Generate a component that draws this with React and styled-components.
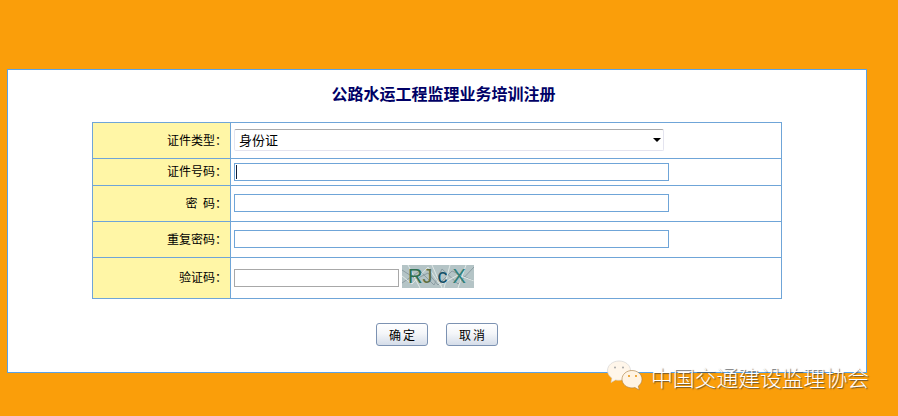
import React from 'react';
import styled, { createGlobalStyle } from 'styled-components';

const GlobalStyle = createGlobalStyle`
  html, body {
    margin: 0;
    padding: 0;
    background: #fa9e0a;
  }
`;

const Page = styled.div`
  position: relative;
  width: 898px;
  height: 416px;
  padding: 69px 0 0 7px;
  box-sizing: border-box;
  overflow: hidden;
  background: #fa9e0a;
  font-family: "Noto Sans CJK SC", "Liberation Sans", sans-serif;
  font-size: 12px;
  color: #000;
`;

const Panel = styled.div`
  width: 860px;
  height: 304px;
  box-sizing: border-box;
  background: #fff;
  border: 1px solid #5aa2e6;
`;

const Title = styled.h1`
  margin: 0;
  padding: 13px 0 0 13px;
  height: 52px;
  box-sizing: border-box;
  text-align: center;
  font-size: 16px;
  line-height: 20px;
  font-weight: bold;
  color: #000066;
`;

const FormTable = styled.table`
  width: 690px;
  margin: 0 auto;
  border-collapse: collapse;
  table-layout: fixed;
`;

const Row = styled.tr`
  height: ${(p) => p.$height}px;
`;

const Label = styled.td`
  width: 134px;
  padding: 0 3px 2px 0;
  border: 1px solid #6fa5d8;
  background: #fff6a6;
  text-align: right;
  line-height: 16px;
`;

const Field = styled.td`
  padding: 0 3px 1px;
  border: 1px solid #6fa5d8;
`;

const FieldInner = styled.div`
  position: relative;
  display: flex;
  align-items: center;
`;

const SelectBox = styled.div`
  position: relative;
  width: 430px;
  height: 22px;

  &::after {
    content: "";
    position: absolute;
    right: 3px;
    top: 9px;
    border-style: solid;
    border-width: 4px 4px 0;
    border-color: #000 transparent transparent;
  }
`;

const Select = styled.select`
  appearance: none;
  display: block;
  width: 100%;
  height: 100%;
  padding: 0 0 2px 4px;
  box-sizing: border-box;
  border: 1px solid #e4e4ef;
  border-top-color: #aaa;
  border-radius: 2px;
  background: #fff;
  font: inherit;
  font-size: 13px;
  color: #000;
  outline: none;
`;

const TextInput = styled.input`
  display: block;
  width: ${(p) => p.$width || 435}px;
  height: 18px;
  padding: 0 1px;
  box-sizing: border-box;
  border: 1px solid ${(p) => (p.$plain ? '#a8a8a8' : '#6fa5d8')};
  background: #fff;
  font: inherit;
  outline: none;
`;

const Caret = styled.span`
  position: absolute;
  left: 2px;
  top: 2px;
  width: 1px;
  height: 14px;
  background: #10203a;
`;

const Captcha = styled.div`
  position: relative;
  display: flex;
  align-items: center;
  width: 72px;
  height: 23px;
  margin: -3px 0 0 3px;
  padding-left: 6px;
  box-sizing: border-box;
  background: #b4c4c6;
  font-family: "Liberation Sans", sans-serif;
  line-height: 20px;
`;

const CaptchaNoise = styled.svg`
  position: absolute;
  left: 0;
  top: 0;
`;

const CaptchaChar = styled.span`
  position: relative;
  margin-left: ${(p) => p.$gap || 0}px;
  color: ${(p) => p.$color};
  font-size: ${(p) => p.$size}px;
`;

const Buttons = styled.div`
  display: flex;
  justify-content: center;
  gap: 18px;
  margin-top: 24px;
`;

const Button = styled.button`
  width: 52px;
  height: 23px;
  padding: 0 0 0 2px;
  box-sizing: border-box;
  border: 1px solid #7c92b2;
  border-radius: 3px;
  background: linear-gradient(#ffffff, #f4f6f9 45%, #d5dde9);
  font: inherit;
  letter-spacing: 2px;
  color: #000;
`;

const Watermark = styled.div`
  position: absolute;
  left: 606px;
  top: 360px;
  display: flex;
  align-items: flex-start;
  gap: 8px;
`;

const WatermarkText = styled.span`
  margin-top: 3px;
  font-size: 21.8px;
  line-height: 28px;
  font-weight: 300;
  color: #fff;
  white-space: nowrap;
  text-shadow: 1px 1px 1px rgba(60, 60, 60, 0.75);
`;

const WechatIcon = () => (
  <svg width="37" height="31" viewBox="0 0 37 31">
    <path
      d="M13 1C6.5 1 1.5 5.3 1.5 10.6c0 3.1 1.700 5.800 4.400 7.600L5 22.500l4.600-2.600c1.100.3 2.200.4 3.400.4 6.500 0 11.500-4.300 11.500-9.700S19.500 1 13 1z"
      fill="#fff6ea"
      stroke="#cfcfcf"
      strokeWidth="0.6"
    />
    <path
      d="M26 10.500c-5.500 0-10 3.900-10 8.700s4.500 8.700 10 8.700c1 0 2-.1 2.900-.4l4.300 2.500-.9-3.900c2.300-1.600 3.700-4.100 3.700-6.900 0-4.800-4.500-8.700-10-8.700z"
      fill="#fff3e2"
      stroke="#a87a3a"
      strokeWidth="0.6"
    />
    <circle cx="9" cy="7.500" r="1" fill="#a8a8a8" />
    <circle cx="17" cy="7.500" r="1" fill="#a8a8a8" />
    <circle cx="23" cy="16" r="1" fill="#e8920a" />
    <circle cx="30" cy="16" r="1" fill="#e8920a" />
  </svg>
);

const App = () => (
  <Page>
    <GlobalStyle />
    <Panel>
      <Title>公路水运工程监理业务培训注册</Title>
      <FormTable>
        <tbody>
          <Row $height={36}>
            <Label>证件类型：</Label>
            <Field>
              <SelectBox>
                <Select defaultValue="身份证">
                  <option>身份证</option>
                </Select>
              </SelectBox>
            </Field>
          </Row>
          <Row $height={27}>
            <Label>证件号码：</Label>
            <Field>
              <FieldInner>
                <TextInput />
                <Caret />
              </FieldInner>
            </Field>
          </Row>
          <Row $height={36}>
            <Label>密&nbsp;&nbsp;码：</Label>
            <Field>
              <TextInput type="password" />
            </Field>
          </Row>
          <Row $height={36}>
            <Label>重复密码：</Label>
            <Field>
              <TextInput type="password" />
            </Field>
          </Row>
          <Row $height={41}>
            <Label>验证码：</Label>
            <Field>
              <FieldInner>
                <TextInput $plain $width={165} />
                <Captcha>
                  <CaptchaNoise width="72" height="23" viewBox="0 0 72 23">
                    <g fill="none" stroke="#8c9da3" strokeWidth="1">
                      <path d="M0 5l14 9 12-6 10 12 14-14 22 10" />
                      <path d="M0 18l18-12 14 14 8-16 16 15 16-17" />
                    </g>
                    <g fill="none" stroke="#dfe8e6" strokeWidth="1">
                      <path d="M0 11l10 8 16-17 12 18 18-10 16 6" />
                      <path d="M6 0l12 23M30 0l10 23M48 0l-6 23M64 0l-8 23" />
                    </g>
                  </CaptchaNoise>
                  <CaptchaChar $color="#2c6f50" $size={20}>R</CaptchaChar>
                  <CaptchaChar $color="#5f6f40" $size={20}>J</CaptchaChar>
                  <CaptchaChar $color="#124f66" $gap={5} $size={20}>c</CaptchaChar>
                  <CaptchaChar $color="#2f7f78" $gap={5} $size={20}>X</CaptchaChar>
                </Captcha>
              </FieldInner>
            </Field>
          </Row>
        </tbody>
      </FormTable>
      <Buttons>
        <Button>确定</Button>
        <Button>取消</Button>
      </Buttons>
    </Panel>
    <Watermark>
      <WechatIcon />
      <WatermarkText>中国交通建设监理协会</WatermarkText>
    </Watermark>
  </Page>
);

export default App;
